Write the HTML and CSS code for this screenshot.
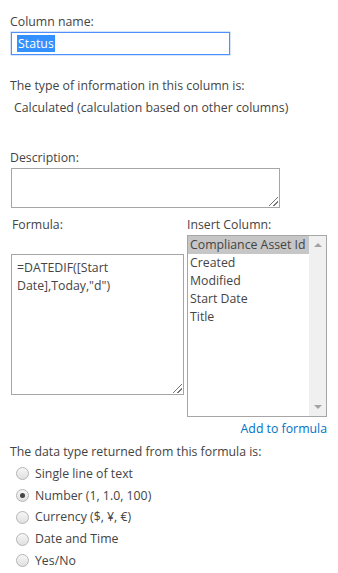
FILE: index.html
```html
<!DOCTYPE html>
<html lang="en">
<head>
    <meta charset="UTF-8" />
    <title>Column settings</title>
    <meta name="viewport" content="width=device-width, initial-scale=1" />
    <link rel="stylesheet" href="styles.css">
</head>
<body>
    <div class="form">
        <!-- Column name -->
        <div class="label">Column name:</div>
        <div class="name-box"><span class="sel">Status</span></div>

        <!-- Type info -->
        <div class="label type-label">The type of information in this column is:</div>
        <div class="type-value">Calculated (calculation based on other columns)</div>

        <!-- Description -->
        <div class="label desc-label">Description:</div>
        <div class="desc-box"><span class="grip"></span></div>

        <!-- Formula + insert column -->
        <div class="formula-row">
            <div class="formula-col">
                <div class="label formula-label">Formula:</div>
                <div class="formula-box">=DATEDIF([Start<br>Date],Today,"d")<span class="grip"></span></div>
            </div>
            <div class="insert-col">
                <div class="label">Insert Column:</div>
                <div class="listbox">
                    <ul class="items">
                        <li class="on">Compliance Asset Id</li>
                        <li>Created</li>
                        <li>Modified</li>
                        <li>Start Date</li>
                        <li>Title</li>
                    </ul>
                    <div class="scroll">
                        <span class="arrow up"></span>
                        <span class="arrow down"></span>
                    </div>
                </div>
                <a class="add-link" href="#">Add to formula</a>
            </div>
        </div>

        <!-- Return type -->
        <div class="label return-label">The data type returned from this formula is:</div>
        <ul class="radios">
            <li><span class="radio"></span>Single line of text</li>
            <li><span class="radio checked"></span>Number (1, 1.0, 100)</li>
            <li><span class="radio"></span>Currency ($, ¥, €)</li>
            <li><span class="radio"></span>Date and Time</li>
            <li><span class="radio"></span>Yes/No</li>
        </ul>
    </div>
</body>
</html>
```

FILE: styles.css
```css
html, body {
    margin: 0;
    padding: 0;
    background: #fff;
}
body {
    font-family: "Open Sans", "Noto Sans", Arial, sans-serif;
    font-size: 12.3px;
    line-height: 18px;
    color: #444;
}
.form {
    padding: 13px 0 0 10px;
}
.label {
    white-space: nowrap;
}
/* Column name input */
.name-box {
    margin: 1px 0 0 1px;
    width: 212px;
    height: 21px;
    border: 1px solid #4d90fe;
    box-shadow: 0 0 0 0.5px #a9c8f5;
    padding: 0 0 0 5px;
    box-sizing: content-box;
    display: flex;
    align-items: center;
}
.sel {
    background: #3390ff;
    color: #fff;
    line-height: 17px;
    padding: 0 1px;
}
.type-label {
    margin-top: 22px;
}
.type-value {
    margin: 4px 0 0 4px;
}
.desc-label {
    margin-top: 32px;
}
.desc-box {
    position: relative;
    margin: 1px 0 0 1px;
    width: 267px;
    height: 38px;
    border: 1px solid #a6a6a6;
}
/* resize grip */
.grip {
    position: absolute;
    right: 1px;
    bottom: 1px;
    width: 9px;
    height: 9px;
    background: linear-gradient(135deg, transparent 45%, #777 45%, #777 53%, transparent 53%, transparent 70%, #777 70%, #777 78%, transparent 78%);
}
.formula-row {
    display: flex;
    margin-top: 8px;
}
.formula-col {
    width: 177px;
}
.formula-label {
    margin-left: 2px;
}
.formula-box {
    position: relative;
    margin: 20px 0 0 1px;
    width: 166px;
    height: 135px;
    border: 1px solid #a6a6a6;
    padding: 4px 0 0 5px;
    box-sizing: content-box;
    white-space: nowrap;
}
.insert-col {
    display: flex;
    flex-direction: column;
    align-items: flex-start;
}
.listbox {
    display: flex;
    margin-top: 1px;
    width: 138px;
    height: 180px;
    border: 1px solid #a6a6a6;
}
.items {
    flex: 1;
    list-style: none;
    margin: 0;
    padding: 0;
}
.items li {
    height: 18px;
    line-height: 18px;
    padding-left: 2px;
    white-space: nowrap;
    overflow: hidden;
}
.items li.on {
    background: #c6c6c6;
}
.scroll {
    width: 17px;
    background: #f0f0f0;
    display: flex;
    flex-direction: column;
    justify-content: space-between;
    align-items: center;
    padding: 7px 0 7px;
}
.arrow {
    width: 0;
    height: 0;
    border-left: 4px solid transparent;
    border-right: 4px solid transparent;
}
.arrow.up {
    border-bottom: 4px solid #a3a3a3;
}
.arrow.down {
    border-top: 4px solid #a3a3a3;
}
.add-link {
    align-self: flex-end;
    margin: 3px 0 0 0;
    color: #0072c6;
    text-decoration: none;
}
.return-label {
    margin-top: 5px;
}
.radios {
    list-style: none;
    margin: 2px 0 0 0;
    padding: 0 0 0 6px;
}
.radios li {
    display: flex;
    align-items: center;
    height: 21.75px;
}
.radio {
    width: 11px;
    height: 11px;
    border: 1px solid #b5b5b5;
    border-radius: 50%;
    background: linear-gradient(#f6f6f6, #e0e0e0);
    margin-right: 6px;
    position: relative;
}
.radio.checked::after {
    content: "";
    position: absolute;
    left: 3px;
    top: 3px;
    width: 5px;
    height: 5px;
    border-radius: 50%;
    background: #444;
}
```
